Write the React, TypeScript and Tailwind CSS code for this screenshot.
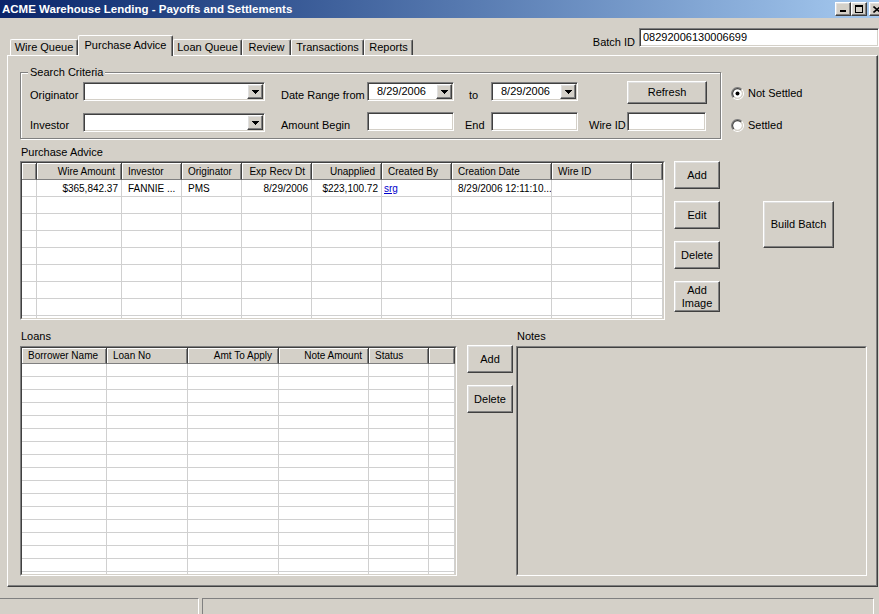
import React from "react";

const raised =
  "border border-t-white border-l-white border-r-[#404040] border-b-[#404040] shadow-[inset_-1px_-1px_0_#808080,inset_1px_1px_0_#dfdfdf]";
const sunken =
  "border border-t-[#808080] border-l-[#808080] border-r-white border-b-white shadow-[inset_1px_1px_0_#404040,inset_-1px_-1px_0_#d4d0c8]";

type Col = { label: string; w: string; right?: boolean };

const adviceCols: Col[] = [
  { label: "", w: "w-[15px]" },
  { label: "Wire Amount", w: "w-[85px]", right: true },
  { label: "Investor", w: "w-[60px]" },
  { label: "Originator", w: "w-[60px]" },
  { label: "Exp Recv Dt", w: "w-[70px]", right: true },
  { label: "Unapplied", w: "w-[70px]", right: true },
  { label: "Created By", w: "w-[70px]" },
  { label: "Creation Date", w: "w-[100px]" },
  { label: "Wire ID", w: "w-[80px]" },
  { label: "", w: "flex-1" },
];

const loanCols: Col[] = [
  { label: "Borrower Name", w: "w-[85px]" },
  { label: "Loan No", w: "w-[81px]" },
  { label: "Amt To Apply", w: "w-[91px]", right: true },
  { label: "Note Amount", w: "w-[90px]", right: true },
  { label: "Status", w: "w-[60px]" },
  { label: "", w: "flex-1" },
];

const adviceRow: React.ReactNode[] = [
  "",
  "$365,842.37",
  "FANNIE ...",
  "PMS",
  "8/29/2006",
  "$223,100.72",
  <span className="-ml-[4px] text-[#0000cc] underline">srg</span>,
  "8/29/2006 12:11:10...",
  "",
  "",
];

function Arrow() {
  return (
    <svg width="7" height="4" viewBox="0 0 7 4" shapeRendering="crispEdges">
      <rect x="0" y="0" width="7" height="1" fill="#000" />
      <rect x="1" y="1" width="5" height="1" fill="#000" />
      <rect x="2" y="2" width="3" height="1" fill="#000" />
      <rect x="3" y="3" width="1" height="1" fill="#000" />
    </svg>
  );
}

function DropField({ className, text }: { className: string; text?: string }) {
  return (
    <div className={`flex h-[19px] bg-white p-[1px] ${sunken} ${className}`}>
      <div className="flex-1 pl-[8px] text-[11px] leading-[15px]">{text}</div>
      <div className={`flex w-[16px] items-center justify-center bg-[#d4d0c8] ${raised}`}>
        <Arrow />
      </div>
    </div>
  );
}

function Field({ className }: { className: string }) {
  return <div className={`h-[19px] bg-white ${sunken} ${className}`} />;
}

function Btn({ className, children }: { className: string; children: React.ReactNode }) {
  return (
    <div
      className={`flex items-center justify-center bg-[#d4d0c8] text-center text-[11px] leading-[13px] ${raised} ${className}`}
    >
      {children}
    </div>
  );
}

function Radio({ checked, label }: { checked?: boolean; label: string }) {
  return (
    <div className="flex items-center gap-[4px] text-[11px]">
      <svg width="13" height="13" viewBox="0 0 12 12">
        <path d="M2.1 9.9A5.5 5.5 0 0 1 9.9 2.1" stroke="#808080" fill="none" />
        <path d="M9.9 2.1A5.5 5.5 0 0 1 2.1 9.9" stroke="#fff" fill="none" />
        <circle cx="6" cy="6" r="4.2" fill="#fff" />
        <path d="M2.8 9.2A4.5 4.5 0 0 1 9.2 2.8" stroke="#404040" fill="none" />
        <path d="M9.2 2.8A4.5 4.5 0 0 1 2.8 9.2" stroke="#d4d0c8" fill="none" />
        {checked && <circle cx="6" cy="6" r="1.8" fill="#000" />}
      </svg>
      <span>{label}</span>
    </div>
  );
}

function Grid({
  cols,
  rows,
  data,
  headH,
  rowH,
  className,
}: {
  cols: Col[];
  rows: number;
  data: React.ReactNode[][];
  headH: string;
  rowH: string;
  className: string;
}) {
  return (
    <div className={`border border-t-[#808080] border-l-[#808080] border-r-white border-b-white ${className}`}>
      <div className="flex h-full flex-col overflow-hidden border border-t-[#404040] border-l-[#404040] border-r-[#d4d0c8] border-b-[#d4d0c8] bg-white text-[10px]">
        <div className={`flex shrink-0 ${headH}`}>
          {cols.map((c, i) => (
            <div
              key={i}
              className={`flex items-center overflow-hidden whitespace-nowrap border-r border-b border-r-[#404040] border-b-[#808080] bg-[#d4d0c8] shadow-[inset_1px_1px_0_white,inset_-1px_0_0_#808080] ${c.w} ${
                c.right ? "justify-end pr-[6px]" : "pl-[6px]"
              }`}
            >
              {c.label}
            </div>
          ))}
        </div>
        {Array.from({ length: rows }).map((_, r) => (
          <div key={r} className={`flex shrink-0 ${rowH}`}>
            {cols.map((c, i) => (
              <div
                key={i}
                className={`flex items-center overflow-hidden whitespace-nowrap border-r border-b border-[#d0d0d0] ${c.w} ${
                  c.right ? "justify-end pr-[3px]" : "pl-[6px]"
                }`}
              >
                {data[r]?.[i]}
              </div>
            ))}
          </div>
        ))}
      </div>
    </div>
  );
}

function Tab({ label, w, active }: { label: string; w: string; active?: boolean }) {
  if (active)
    return (
      <div
        className={`relative top-[1px] flex h-[21px] items-start justify-center rounded-t-[2px] border-t border-l border-r border-t-white border-l-white border-r-[#404040] bg-[#d4d0c8] pt-[3px] shadow-[inset_-1px_0_0_#808080] ${w}`}
      >
        {label}
      </div>
    );
  return (
    <div
      className={`flex h-[16px] items-start justify-center rounded-t-[2px] border-t border-l border-r border-t-white border-l-white border-r-[#404040] pt-[1px] shadow-[inset_-1px_0_0_#808080] ${w}`}
    >
      {label}
    </div>
  );
}

export default function App() {
  return (
    <div className="h-[614px] w-[879px] overflow-hidden bg-[#d4d0c8] font-['Liberation_Sans',Arial,sans-serif] text-[11px] leading-[13px] text-black">
      {/* Title bar */}
      <div className="flex h-[18px] items-center justify-between bg-linear-to-r from-[#0a246a] to-[#a6caf0] pl-[2px]">
        <span className="text-[11.5px] font-bold text-white">ACME Warehouse Lending - Payoffs and Settlements</span>
        <div className="-mr-[6px] flex">
          <div className={`flex h-[14px] w-[16px] items-end justify-center bg-[#d4d0c8] pb-[3px] ${raised}`}>
            <div className="h-[2px] w-[6px] bg-black" />
          </div>
          <div className={`flex h-[14px] w-[16px] items-center justify-center bg-[#d4d0c8] ${raised}`}>
            <div className="h-[8px] w-[8px] border border-t-2 border-black" />
          </div>
          <div className={`ml-[2px] flex h-[14px] w-[16px] items-center justify-center bg-[#d4d0c8] ${raised}`}>
            <svg width="8" height="7" viewBox="0 0 8 7">
              <path d="M0.5 0.5L7.5 6.5M7.5 0.5L0.5 6.5" stroke="#000" strokeWidth="1.6" />
            </svg>
          </div>
        </div>
      </div>

      {/* Tabs + batch id */}
      <div className="relative z-10 flex h-[37px] items-end justify-between">
        <div className="flex items-end pl-[10px]">
          <Tab label="Wire Queue" w="w-[68px]" />
          <Tab label="Purchase Advice" w="w-[95px]" active />
          <Tab label="Loan Queue" w="w-[69px]" />
          <Tab label="Review" w="w-[49px]" />
          <Tab label="Transactions" w="w-[73px]" />
          <Tab label="Reports" w="w-[49px]" />
        </div>
        <div className="flex items-start self-start pt-[10px]">
          <span className="mr-[4px] pt-[8px]">Batch ID</span>
          <div className={`h-[19px] w-[240px] bg-white pl-[3px] pt-[2px] ${sunken}`}>08292006130006699</div>
        </div>
      </div>

      {/* Tab panel */}
      <div className="ml-[7px] h-[532px] w-[871px] border border-t-white border-l-white border-r-[#404040] border-b-[#404040] pl-[12px] shadow-[inset_-1px_-1px_0_#808080]">
        {/* Search criteria */}
        <div className="mt-[16px] flex">
          <div className="relative h-[67px] w-[701px] border border-[#808080] shadow-[inset_1px_1px_0_white,1px_1px_0_white]">
            <span className="absolute -top-[7px] left-[7px] bg-[#d4d0c8] px-[2px]">Search Criteria</span>
            <div className="flex pl-[9px] pt-[9px]">
              <span className="w-[53px] pt-[7px]">Originator</span>
              <DropField className="w-[182px]" />
              <span className="ml-[16px] w-[86px] pt-[7px]">Date Range from</span>
              <DropField className="h-[18px] w-[87px]" text="8/29/2006" />
              <span className="ml-[15px] w-[22px] pt-[7px]">to</span>
              <DropField className="h-[18px] w-[87px]" text="8/29/2006" />
              <Btn className="-mt-[1px] ml-[49px] h-[23px] w-[80px]">Refresh</Btn>
            </div>
            <div className="mt-[8px] flex pl-[9px]">
              <span className="w-[53px] pt-[7px]">Investor</span>
              <DropField className="mt-[1px] w-[182px]" />
              <span className="ml-[16px] w-[86px] pt-[7px]">Amount Begin</span>
              <Field className="w-[87px]" />
              <span className="ml-[11px] w-[26px] pt-[7px]">End</span>
              <Field className="w-[87px]" />
              <span className="ml-[11px] w-[38px] pt-[7px]">Wire ID</span>
              <Field className="w-[79px]" />
            </div>
          </div>
          <div className="ml-[10px] flex flex-col gap-[19px] pt-[15px]">
            <Radio checked label="Not Settled" />
            <Radio label="Settled" />
          </div>
        </div>

        {/* Purchase advice */}
        <div className="mt-[7px] pl-[1px]">Purchase Advice</div>
        <div className="mt-[2px] flex">
          <Grid
            cols={adviceCols}
            rows={9}
            data={[adviceRow]}
            headH="h-[17px]"
            rowH="h-[17px]"
            className="h-[159px] w-[645px]"
          />
          <div className="ml-[9px] flex flex-col gap-[12px]">
            <Btn className="h-[28px] w-[46px]">Add</Btn>
            <Btn className="h-[28px] w-[46px]">Edit</Btn>
            <Btn className="h-[28px] w-[46px]">Delete</Btn>
            <Btn className="h-[31px] w-[46px]">
              Add
              <br />
              Image
            </Btn>
          </div>
          <Btn className="ml-[43px] mt-[40px] h-[47px] w-[71px]">Build Batch</Btn>
        </div>

        {/* Loans + notes */}
        <div className="mt-[10px] flex">
          <div className="flex flex-col">
            <div className="pl-[1px]">Loans</div>
            <Grid
              cols={loanCols}
              rows={17}
              data={[]}
              headH="h-[16px]"
              rowH="h-[13px]"
              className="mt-[3px] h-[230px] w-[437px]"
            />
          </div>
          <div className="ml-[10px] flex flex-col gap-[12px] pt-[15px]">
            <Btn className="h-[28px] w-[46px]">Add</Btn>
            <Btn className="h-[28px] w-[46px]">Delete</Btn>
          </div>
          <div className="ml-[3px] flex flex-col">
            <div className="pl-[1px]">Notes</div>
            <div className="mt-[3px] h-[230px] w-[351px] border border-t-[#808080] border-l-[#808080] border-r-white border-b-white">
              <div className="h-full border border-t-[#404040] border-l-[#404040] border-r-[#d4d0c8] border-b-[#d4d0c8]" />
            </div>
          </div>
        </div>
      </div>

      {/* Status bar */}
      <div className="mt-[11px] flex h-[16px] gap-[3px]">
        <div className="h-full w-[199px] border-t border-r border-t-[#808080] border-r-white" />
        <div className="h-full w-[672px] border-t border-l border-r border-t-[#808080] border-l-[#808080] border-r-white" />
      </div>
    </div>
  );
}
